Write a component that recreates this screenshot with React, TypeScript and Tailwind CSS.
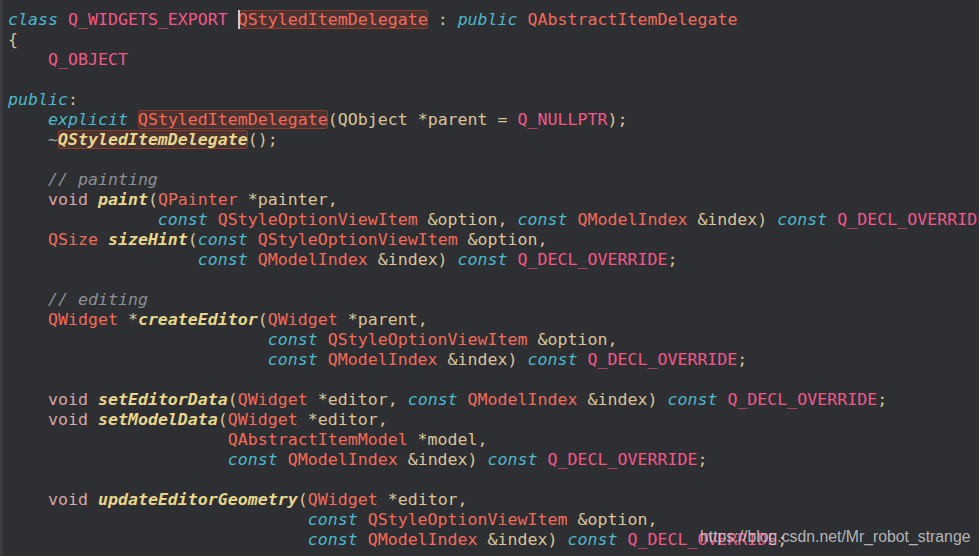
import React from "react";

type Tok = [string, string?];

const K = "kw"; // italic cyan
const T = "ty"; // red type
const M = "mc"; // pink macro
const F = "fn"; // bold italic yellow
const V = "vd"; // void
const C = "cm"; // comment
const BX = "bx"; // boxed red
const BF = "bf"; // boxed fn
const G = "gr";

const cls: Record<string, string> = {
  kw: "italic text-[#4bb8cc]",
  ty: "text-[#f26b5b]",
  mc: "text-[#f2588a]",
  fn: "italic font-bold text-[#e9d68d]",
  vd: "text-[#d9a4aa]",
  cm: "italic text-[#8c9096]",
  gr: "text-[#a8a4a0]",
  bx: "text-[#f26b5b] rounded-[3px] bg-[#4a3330] shadow-[inset_0_0_0_1px_#8a3c2c]",
  bf: "italic font-bold text-[#e9d68d] rounded-[3px] bg-[#4a3330] shadow-[inset_0_0_0_1px_#8a3c2c]",
  df: "text-[#d9c49b]",
};

const ind = (n: number): Tok => [" ".repeat(n)];

const lines: Tok[][] = [
  [["class", K], [" "], ["Q_WIDGETS_EXPORT", M], [" "], ["QStyledItemDelegate", "cursor"], [" : "], ["public", K], [" "], ["QAbstractItemDelegate", T]],
  [["{"]],
  [ind(4), ["Q_OBJECT", M]],
  [],
  [["public", K], [":"]],
  [ind(4), ["explicit", K], [" "], ["QStyledItemDelegate", BX], ["(QObject *parent = "], ["Q_NULLPTR", M], [");"]],
  [ind(4), ["~", G], ["QStyledItemDelegate", BF], ["();"]],
  [],
  [ind(4), ["// painting", C]],
  [ind(4), ["void", V], [" "], ["paint", F], ["("], ["QPainter", T], [" *painter,"]],
  [ind(15), ["const", K], [" "], ["QStyleOptionViewItem", T], [" &option, "], ["const", K], [" "], ["QModelIndex", T], [" &index) "], ["const", K], [" "], ["Q_DECL_OVERRIDE", M], [";"]],
  [ind(4), ["QSize", T], [" "], ["sizeHint", F], ["("], ["const", K], [" "], ["QStyleOptionViewItem", T], [" &option,"]],
  [ind(19), ["const", K], [" "], ["QModelIndex", T], [" &index) "], ["const", K], [" "], ["Q_DECL_OVERRIDE", M], [";"]],
  [],
  [ind(4), ["// editing", C]],
  [ind(4), ["QWidget", T], [" *"], ["createEditor", F], ["("], ["QWidget", T], [" *parent,"]],
  [ind(26), ["const", K], [" "], ["QStyleOptionViewItem", T], [" &option,"]],
  [ind(26), ["const", K], [" "], ["QModelIndex", T], [" &index) "], ["const", K], [" "], ["Q_DECL_OVERRIDE", M], [";"]],
  [],
  [ind(4), ["void", V], [" "], ["setEditorData", F], ["("], ["QWidget", T], [" *editor, "], ["const", K], [" "], ["QModelIndex", T], [" &index) "], ["const", K], [" "], ["Q_DECL_OVERRIDE", M], [";"]],
  [ind(4), ["void", V], [" "], ["setModelData", F], ["("], ["QWidget", T], [" *editor,"]],
  [ind(22), ["QAbstractItemModel", T], [" *model,"]],
  [ind(22), ["const", K], [" "], ["QModelIndex", T], [" &index) "], ["const", K], [" "], ["Q_DECL_OVERRIDE", M], [";"]],
  [],
  [ind(4), ["void", V], [" "], ["updateEditorGeometry", F], ["("], ["QWidget", T], [" *editor,"]],
  [ind(30), ["const", K], [" "], ["QStyleOptionViewItem", T], [" &option,"]],
  [ind(30), ["const", K], [" "], ["QModelIndex", T], [" &index) "], ["const", K], [" "], ["Q_DECL_OVERRIDE", M], [";"]],
];

function Token({ t }: { t: Tok }) {
  const [text, kind] = t;
  if (kind === "cursor") {
    return (
      <span className={cls.bx + " relative"}>
        <span className="absolute left-0 top-0 h-full w-[2px] bg-[#c6d0d0]" />
        {text}
      </span>
    );
  }
  return <span className={kind ? cls[kind] : cls.df}>{text}</span>;
}

export default function App() {
  return (
    <div className="relative flex h-[556px] w-[979px] overflow-hidden bg-[#2e2f32]">
      <div className="w-[3px] shrink-0 bg-[#3a3b3e]" />
      <div
        className="pl-[5px] pt-[10px] whitespace-pre text-[16.6px] leading-[20px]"
        style={{ fontFamily: '"DejaVu Sans Mono", monospace' }}
      >
        {lines.map((ln, i) => (
          <div key={i} className="h-[20px]">
            {ln.map((t, j) => (
              <Token key={j} t={t} />
            ))}
          </div>
        ))}
      </div>
      <div
        className="absolute left-[700px] top-[527px] text-[15.8px] leading-[20px] text-[#d8d8d8]/80"
        style={{ fontFamily: '"Liberation Sans", Arial, sans-serif' }}
      >
        https://blog.csdn.net/Mr_robot_strange
      </div>
    </div>
  );
}
